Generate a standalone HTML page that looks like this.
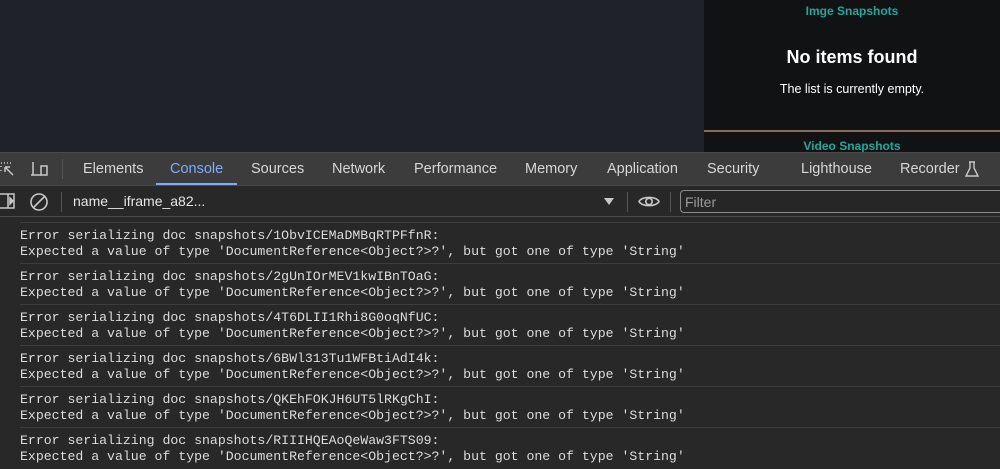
<!DOCTYPE html>
<html><head><meta charset="utf-8"><style>
*{margin:0;padding:0;box-sizing:border-box}
body{width:1000px;height:469px;overflow:hidden;background:#282828;font-family:"Liberation Sans",sans-serif;position:relative}
.top{position:absolute;left:0;top:0;width:1000px;height:152px;background:#1f222b}
.rp{position:absolute;left:704px;top:0;width:296px;height:152px;background:#111214;text-align:center;color:#fff}
.tabs{position:absolute;left:0;top:152px;width:1000px;height:33px;background:#3c3c3c;border-top:1px solid #4a4a4a}
.tab{position:absolute;top:8px;font-size:14.5px;color:#d6d6d6}
.bar{position:absolute;left:0;top:185px;width:1000px;height:32px;background:#282828;border-top:1px solid #4a4a4a;border-bottom:1px solid #4a4a4a}
.msgs{position:absolute;left:0;top:222px;width:1000px}
.m{height:41px;border-top:1px solid #3d3d3d;margin-left:20px;font-family:"Liberation Mono",monospace;font-size:13.2px;line-height:16px;color:#dcdcdc;padding-top:5px;white-space:pre}
</style></head><body>
<div class="top"></div>
<div class="rp">
<div style="position:absolute;left:0;width:296px;top:4px;font-size:12px;color:#1fa898;font-weight:bold">Imge Snapshots</div>
<div style="position:absolute;left:0;width:296px;top:47px;font-size:18px;font-weight:bold">No items found</div>
<div style="position:absolute;left:0;width:296px;top:82px;font-size:12.5px">The list is currently empty.</div>
<div style="position:absolute;left:0;width:296px;top:130px;height:2px;background:#8a6a5c"></div>
<div style="position:absolute;left:0;width:296px;top:139px;font-size:12px;color:#1fa898;font-weight:bold">Video Snapshots</div>
</div>
<div class="tabs">
<svg style="position:absolute;left:0;top:8px" width="18" height="18" viewBox="0 0 18 18" fill="none" stroke="#c8c8c8" stroke-width="1.5"><path d="M1 2h1M4 2h1M7 2h1M10 2h1M1 5v1M1 9v1"/><path d="M5 6l8 8M5 6v5M5 6h5"/></svg>
<svg style="position:absolute;left:29px;top:7px" width="22" height="20" viewBox="0 0 22 20" fill="none" stroke="#c8c8c8" stroke-width="1.5"><path d="M4 2v13h8M2 15h2"/><rect x="12" y="6" width="6" height="9"/></svg>
<div style="position:absolute;left:62px;top:6px;width:1px;height:20px;background:#555"></div>
<span class="tab" style="left:83px">Elements</span>
<span class="tab" style="left:170px;color:#7cacf8">Console</span>
<div style="position:absolute;left:156px;top:30px;width:81px;height:3px;background:#7cacf8"></div>
<span class="tab" style="left:251px">Sources</span>
<span class="tab" style="left:332px">Network</span>
<span class="tab" style="left:414px">Performance</span>
<span class="tab" style="left:525px">Memory</span>
<span class="tab" style="left:607px">Application</span>
<span class="tab" style="left:707px">Security</span>
<span class="tab" style="left:801px">Lighthouse</span>
<span class="tab" style="left:900px">Recorder</span>
<svg style="position:absolute;left:964px;top:8px" width="16" height="17" viewBox="0 0 16 17" fill="none" stroke="#c8c8c8" stroke-width="1.4"><path d="M5 1h6M6 1v6L2 15h12L10 7V1"/></svg>
</div>
<div class="bar">
<svg style="position:absolute;left:0;top:7px" width="16" height="17" viewBox="0 0 16 17" fill="none" stroke="#c8c8c8" stroke-width="1.5"><rect x="-2" y="1" width="16" height="14"/><path d="M8 1v14"/><path d="M10 5l3 3-3 3z" fill="#c8c8c8"/></svg>
<svg style="position:absolute;left:29px;top:6px" width="20" height="20" viewBox="0 0 20 20" fill="none" stroke="#c8c8c8" stroke-width="1.6"><circle cx="10" cy="10" r="8"/><path d="M4.5 15.5l11-11"/></svg>
<div style="position:absolute;left:61px;top:6px;width:1px;height:20px;background:#555"></div>
<span style="position:absolute;left:73px;top:7px;font-size:14px;color:#e6e6e6">name__iframe_a82...</span>
<div style="position:absolute;left:604px;top:12px;width:0;height:0;border-left:5px solid transparent;border-right:5px solid transparent;border-top:7px solid #c8c8c8"></div>
<div style="position:absolute;left:627px;top:6px;width:1px;height:20px;background:#555"></div>
<svg style="position:absolute;left:638px;top:7px" width="22" height="17" viewBox="0 0 22 17" fill="none" stroke="#c8c8c8" stroke-width="1.6"><path d="M1 8.5C4 3 18 3 21 8.5C18 14 4 14 1 8.5z"/><circle cx="11" cy="8.5" r="3.2"/></svg>
<div style="position:absolute;left:670px;top:6px;width:1px;height:20px;background:#555"></div>
<div style="position:absolute;left:680px;top:4px;width:330px;height:23px;border:1px solid #8a8a8a;border-radius:4px;background:#262626"></div>
<span style="position:absolute;left:685px;top:8px;font-size:14px;color:#9a9a9a">Filter</span>
</div>
<div class="msgs">
<div class="m">Error serializing doc snapshots/1ObvICEMaDMBqRTPFfnR:
Expected a value of type 'DocumentReference&lt;Object?&gt;?', but got one of type 'String'</div>
<div class="m">Error serializing doc snapshots/2gUnIOrMEV1kwIBnTOaG:
Expected a value of type 'DocumentReference&lt;Object?&gt;?', but got one of type 'String'</div>
<div class="m">Error serializing doc snapshots/4T6DLII1Rhi8G0oqNfUC:
Expected a value of type 'DocumentReference&lt;Object?&gt;?', but got one of type 'String'</div>
<div class="m">Error serializing doc snapshots/6BWl313Tu1WFBtiAdI4k:
Expected a value of type 'DocumentReference&lt;Object?&gt;?', but got one of type 'String'</div>
<div class="m">Error serializing doc snapshots/QKEhFOKJH6UT5lRKgChI:
Expected a value of type 'DocumentReference&lt;Object?&gt;?', but got one of type 'String'</div>
<div class="m">Error serializing doc snapshots/RIIIHQEAoQeWaw3FTS09:
Expected a value of type 'DocumentReference&lt;Object?&gt;?', but got one of type 'String'</div>
</div>
</body></html>
